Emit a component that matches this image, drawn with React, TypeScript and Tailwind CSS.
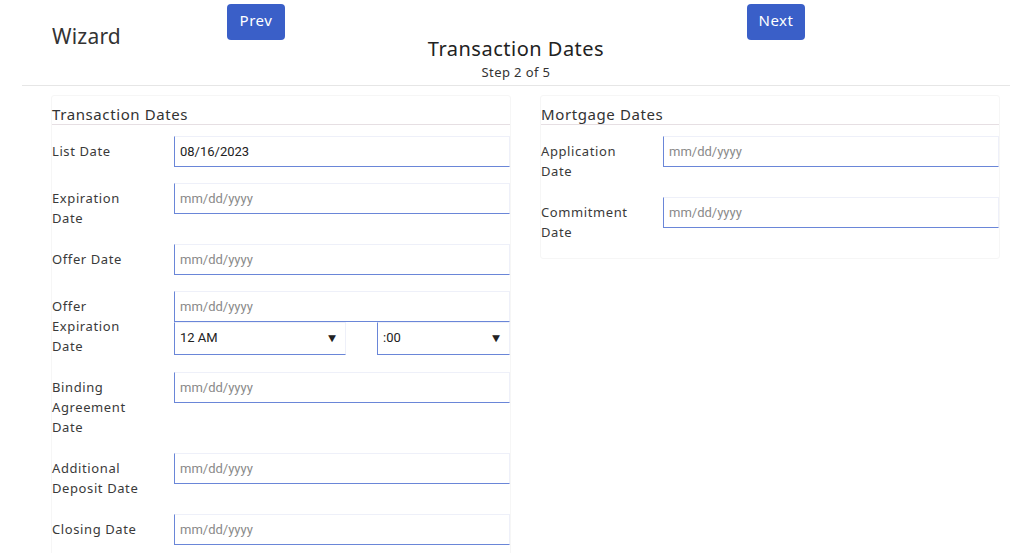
import React from "react"

const labelFont = { fontFamily: '"Noto Sans", "Open Sans", sans-serif' }
const inputFont = { fontFamily: 'Roboto, "Liberation Sans", sans-serif' }

function DateInput({ value }: { value?: string }) {
  return (
    <input
      type="text"
      readOnly
      defaultValue={value}
      placeholder="mm/dd/yyyy"
      style={inputFont}
      className="w-full h-[31px] px-[5px] text-[13px] text-[#222] placeholder:text-[#8a8a8a] bg-white border border-[#eef0f9] border-l-[#6a86d8] border-b-[#6a86d8] outline-none"
    />
  )
}

function TimeSelect({ value, className }: { value: string; className: string }) {
  return (
    <div
      style={inputFont}
      className={`h-[33px] flex items-center justify-between px-[5px] pb-[2px] text-[13px] text-[#222] bg-white border border-[#eef0f9] border-l-[#6a86d8] border-b-[#6a86d8] ${className}`}
    >
      <span>{value}</span>
      <span className="text-[12px] mr-[2px] scale-x-110">▼</span>
    </div>
  )
}

function Row({ label, children }: { label: React.ReactNode; children: React.ReactNode }) {
  return (
    <div className="flex min-h-[31px]">
      <div className="w-[122px] shrink-0 pt-[5px] text-[13px] leading-[20px] tracking-[0.6px] text-[#3a3a3a]">{label}</div>
      <div className="flex-1">{children}</div>
    </div>
  )
}

function Section({ title, children }: { title: string; children: React.ReactNode }) {
  return (
    <div className="border border-[#f6f6f6] rounded-[3px] pt-[8px] pb-[16px] self-start">
      <div className="h-[21px] text-[15px] leading-[20px] tracking-[0.6px] text-[#333] border-b border-[#e6dfe3]">{title}</div>
      <div className="mt-[11px] flex flex-col gap-[16px]">{children}</div>
    </div>
  )
}

export default function App() {
  return (
    <div className="min-h-screen bg-white overflow-hidden" style={labelFont}>
      <div className="px-[22px]">
        <div className="relative h-[86px] border-b border-[#e6e6e6]">
          <div className="absolute left-[30px] top-[22px] text-[21px] leading-[28px] tracking-[0.2px] text-[#333]">Wizard</div>
          <div className="mx-[205px] pt-[4px] flex flex-col">
            <div className="flex justify-between">
              <button className="h-[36px] w-[58px] rounded-[4px] bg-[#3a5fc8] text-white text-[15px] tracking-[0.5px] pb-[3px]">Prev</button>
              <button className="h-[36px] w-[58px] rounded-[4px] bg-[#3a5fc8] text-white text-[15px] tracking-[0.5px] pb-[3px]">Next</button>
            </div>
            <div className="text-center -mt-[2px] text-[20px] leading-[22px] tracking-[0.5px] text-[#222]">Transaction Dates</div>
            <div className="text-center mt-[3px] text-[13px] leading-[18px] tracking-[0.4px] text-[#333]">Step 2 of 5</div>
          </div>
        </div>

        <div className="mt-[9px] pl-[29px] pr-[10px] grid grid-cols-2 gap-[29px] items-start">
          <Section title="Transaction Dates">
            <Row label="List Date">
              <DateInput value="08/16/2023" />
            </Row>
            <Row label={<>Expiration<br />Date</>}>
              <DateInput />
            </Row>
            <Row label="Offer Date">
              <DateInput />
            </Row>
            <Row label={<>Offer<br />Expiration<br />Date</>}>
              <DateInput />
              <div className="flex">
                <TimeSelect value="12 AM" className="w-[172px]" />
                <TimeSelect value=":00" className="flex-1 ml-[31px]" />
              </div>
            </Row>
            <Row label={<>Binding<br />Agreement<br />Date</>}>
              <DateInput />
            </Row>
            <Row label={<>Additional<br />Deposit Date</>}>
              <DateInput />
            </Row>
            <Row label="Closing Date">
              <DateInput />
            </Row>
          </Section>

          <Section title="Mortgage Dates">
            <Row label={<>Application<br />Date</>}>
              <DateInput />
            </Row>
            <Row label={<>Commitment<br />Date</>}>
              <DateInput />
            </Row>
          </Section>
        </div>
      </div>
    </div>
  )
}
